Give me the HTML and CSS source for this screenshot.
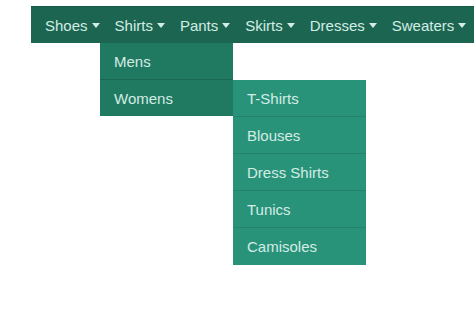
FILE: index.html
```html
<!DOCTYPE html>
<html lang="en">
<head>
    <meta charset="UTF-8">
    <title>Menu</title>
    <link rel="stylesheet" href="styles.css">
</head>
<body>

<div class="top-nav">
    <ul class="nav-bar">
        <li class="nav-item">Shoes <i class="caret"></i></li>
        <li class="nav-item">Shirts <i class="caret"></i></li>
        <li class="nav-item">Pants <i class="caret"></i></li>
        <li class="nav-item">Skirts <i class="caret"></i></li>
        <li class="nav-item">Dresses <i class="caret"></i></li>
        <li class="nav-item">Sweaters <i class="caret"></i></li>
    </ul>

    <!-- Open Shirts menu and its Womens list -->
    <div class="panels">
        <ul class="level-one">
            <li class="level-one-item">Mens</li>
            <li class="level-one-item">Womens</li>
        </ul>
        <ul class="level-two">
            <li class="level-two-item">T-Shirts</li>
            <li class="level-two-item">Blouses</li>
            <li class="level-two-item">Dress Shirts</li>
            <li class="level-two-item">Tunics</li>
            <li class="level-two-item">Camisoles</li>
        </ul>
    </div>
</div>

</body>
</html>
```

FILE: styles.css
```css
body {
    margin: 0;
    background-color: #ffffff;
    font-family: 'Liberation Sans', Arial, sans-serif;
    font-size: 15px;
    color: #d3ece4;
}

ul {
    list-style: none;
    margin: 0;
    padding: 0;
}

.top-nav {
    margin: 6px 0 0 31px;
}

.nav-bar {
    display: flex;
    background-color: #1c6651;
    border-top: 1px solid #175a46;
}

.nav-item {
    display: flex;
    align-items: center;
    height: 36px;
    padding: 0 0 0 14px;
    white-space: nowrap;
}

.caret {
    display: inline-block;
    width: 0;
    height: 0;
    margin: 1px 1px 0 4px;
    border-left: 4.5px solid transparent;
    border-right: 4.5px solid transparent;
    border-top: 5px solid #d3ece4;
}

.panels {
    display: flex;
    align-items: flex-start;
    margin-left: 69px;
}

.level-one,
.level-two {
    width: 133px;
}

.level-one {
    background-color: #207a62;
}

.level-two {
    margin-top: 37px;
    background-color: #29937a;
}

.level-one-item,
.level-two-item {
    height: 36px;
    line-height: 38px;
    padding-left: 14px;
    white-space: nowrap;
}

.level-one-item + .level-one-item {
    border-top: 1px solid #1a6652;
}

.level-two-item {
    border-bottom: 1px solid #23826b;
}

.level-two-item:last-child {
    border-bottom: none;
    height: 37px;
}
```
